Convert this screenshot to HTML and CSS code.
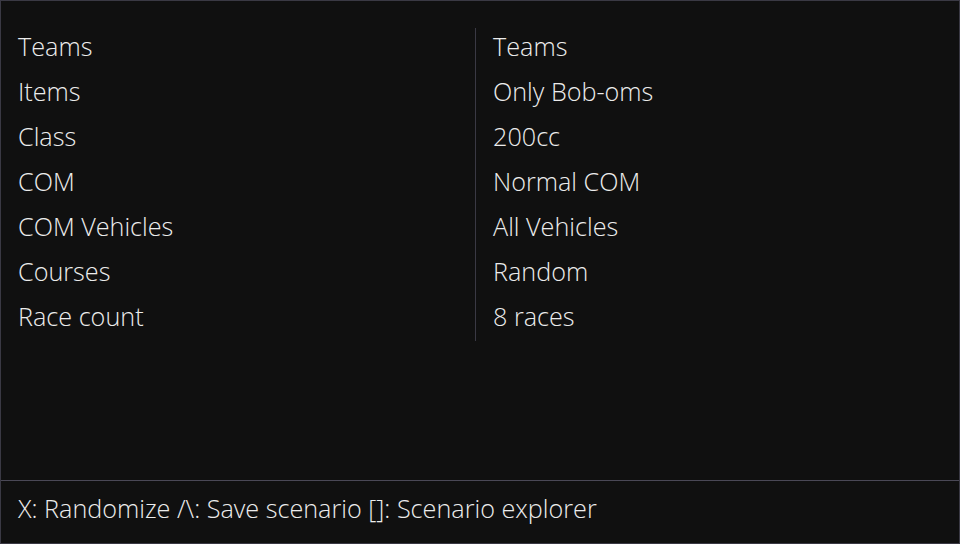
FILE: index.html
```html
<!DOCTYPE html>
<html>
<head>
<meta charset="utf-8">
<link rel="stylesheet" href="styles.css">
</head>
<body>
<div class="frame">
  <div class="main">
    <div class="col labels">
      <div class="row">Teams</div>
      <div class="row">Items</div>
      <div class="row">Class</div>
      <div class="row">COM</div>
      <div class="row">COM Vehicles</div>
      <div class="row">Courses</div>
      <div class="row">Race count</div>
    </div>
    <div class="divider"></div>
    <div class="col values">
      <div class="row">Teams</div>
      <div class="row">Only Bob-oms</div>
      <div class="row">200cc</div>
      <div class="row">Normal COM</div>
      <div class="row">All Vehicles</div>
      <div class="row">Random</div>
      <div class="row">8 races</div>
    </div>
  </div>
  <div class="footer">X: Randomize /\: Save scenario []: Scenario explorer</div>
</div>
</body>
</html>
```
FILE: styles.css
```css
html, body {
  margin: 0;
  padding: 0;
  background: #101010;
}
.frame {
  box-sizing: border-box;
  width: 960px;
  height: 544px;
  border: 1px solid #3a3944;
  background: #101010;
  color: #ececec;
  font-family: "Open Sans", "Noto Sans", sans-serif;
  font-weight: 300;
  font-size: 25.2px;
  display: flex;
  flex-direction: column;
}
.main {
  flex: 1;
  display: flex;
  align-items: flex-start;
  padding-top: 23px;
}
.col {
  display: flex;
  flex-direction: column;
}
.labels {
  width: 474px;
  padding-left: 17px;
  box-sizing: border-box;
}
.values {
  padding-left: 17px;
}
.row {
  height: 45px;
  line-height: 45px;
  white-space: nowrap;
}
.divider {
  width: 1px;
  background: #3a3944;
  margin-top: 4px;
  height: 313px;
}
.footer {
  border-top: 1px solid #4a4856;
  height: 62px;
  line-height: 55px;
  padding-left: 17px;
  white-space: nowrap;
}
```
